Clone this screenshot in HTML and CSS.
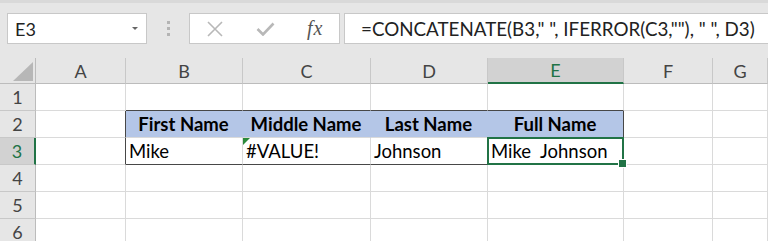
FILE: index.html
```html
<!DOCTYPE html>
<html lang="en">

<head>
  <meta charset="UTF-8">
  <title>CONCATENATE with IFERROR</title>
  <link rel="stylesheet" href="styles.css">
</head>

<body>
  <div class="top-strip"></div>

  <div class="formula-bar">
    <div class="name-box">
      <span>E3</span>
      <span class="caret"></span>
    </div>
    <div class="grip">
      <span></span><span></span><span></span>
    </div>
    <div class="fx-box">
      <svg class="btn" width="18" height="16" viewBox="0 0 18 16">
        <path d="M2 1 L16 15 M16 1 L2 15" stroke="#b8b8b8" stroke-width="1.6" fill="none" />
      </svg>
      <svg class="btn" width="19" height="14" viewBox="0 0 19 14">
        <path d="M1.5 7 L7 12.5 L17.5 1.5" stroke="#b8b8b8" stroke-width="2.6" fill="none" />
      </svg>
      <span class="fx">fx</span>
    </div>
    <div class="formula">=CONCATENATE(B3," ", IFERROR(C3,""), " ", D3)</div>
  </div>

  <div class="sheet">
    <!-- column headers -->
    <div class="corner">
      <svg width="20" height="19" viewBox="0 0 20 19">
        <path d="M0 19 L20 19 L20 0 Z" fill="#b7b7b7" />
      </svg>
    </div>
    <div class="col-head">A</div>
    <div class="col-head">B</div>
    <div class="col-head">C</div>
    <div class="col-head">D</div>
    <div class="col-head active">E</div>
    <div class="col-head">F</div>
    <div class="col-head">G</div>

    <!-- row 1 -->
    <div class="row-head">1</div>
    <div class="cell"></div>
    <div class="cell tbl-top"></div>
    <div class="cell tbl-top"></div>
    <div class="cell tbl-top"></div>
    <div class="cell tbl-top"></div>
    <div class="cell"></div>
    <div class="cell"></div>

    <!-- row 2 -->
    <div class="row-head">2</div>
    <div class="cell tbl-left"></div>
    <div class="cell th">First Name</div>
    <div class="cell th">Middle Name</div>
    <div class="cell th">Last Name</div>
    <div class="cell th tbl-right">Full Name</div>
    <div class="cell"></div>
    <div class="cell"></div>

    <!-- row 3 -->
    <div class="row-head active">3</div>
    <div class="cell tbl-left"></div>
    <div class="cell tbl-bottom">Mike</div>
    <div class="cell tbl-bottom flagged">#VALUE!</div>
    <div class="cell tbl-bottom">Johnson</div>
    <div class="cell tbl-bottom tbl-right selected">Mike&nbsp; Johnson</div>
    <div class="cell"></div>
    <div class="cell"></div>

    <!-- rows 4 to 6 -->
    <div class="row-head">4</div>
    <div class="cell"></div><div class="cell"></div><div class="cell"></div><div class="cell"></div><div class="cell"></div><div class="cell"></div><div class="cell"></div>
    <div class="row-head">5</div>
    <div class="cell"></div><div class="cell"></div><div class="cell"></div><div class="cell"></div><div class="cell"></div><div class="cell"></div><div class="cell"></div>
    <div class="row-head">6</div>
    <div class="cell"></div><div class="cell"></div><div class="cell"></div><div class="cell"></div><div class="cell"></div><div class="cell"></div><div class="cell"></div>
  </div>
</body>

</html>
```

FILE: styles.css
```css
* {
  box-sizing: border-box;
}

body {
  margin: 0;
  background-color: #e6e6e6;
  font-family: Lato, 'Liberation Sans', sans-serif;
  color: #000;
  overflow: hidden;
}

.top-strip {
  height: 3px;
  background-color: #d9d9d9;
}

.formula-bar {
  display: flex;
  align-items: center;
  height: 55px;
  padding: 10px 0 14px 7px;
}

.name-box,
.fx-box,
.formula {
  height: 31px;
  background-color: #fff;
  border: 1px solid #c8c8c8;
  display: flex;
  align-items: center;
}

.name-box {
  width: 140px;
  padding: 0 8px 0 7px;
  justify-content: space-between;
  font-size: 18px;
  color: #222;
}

.caret {
  width: 0;
  height: 0;
  border-left: 3px solid transparent;
  border-right: 3px solid transparent;
  border-top: 3px solid #666;
}

.grip {
  width: 42px;
  display: flex;
  flex-direction: column;
  align-items: center;
  gap: 3px;
}

.grip span {
  width: 3px;
  height: 3px;
  background-color: #b4b4b4;
}

.fx-box {
  width: 151px;
  padding-left: 16px;
}

.fx-box .btn:first-child {
  margin-right: 32px;
}

.fx {
  margin-left: 32px;
  font-family: 'Liberation Serif', serif;
  font-style: italic;
  font-size: 20px;
  color: #555;
  letter-spacing: 1px;
}

.formula {
  flex: 1;
  margin-left: 4px;
  margin-right: -4px;
  padding-left: 16px;
  font-size: 18.8px;
  color: #222;
  white-space: nowrap;
}

.sheet {
  display: grid;
  grid-template-columns: 36px 90px 117px 128px 117px 136px 89px 1fr;
  grid-template-rows: 26px repeat(6, 27px);
  background-color: #fff;
  font-size: 18.5px;
}

.corner {
  background-color: #e6e6e6;
  border-right: 1px solid #bcbcbc;
  border-bottom: 1px solid #bcbcbc;
  display: flex;
  align-items: flex-end;
  justify-content: flex-end;
  padding: 0 2px 2px 0;
}

.col-head {
  background-color: #e6e6e6;
  border-right: 1px solid #c8c8c8;
  border-bottom: 1px solid #bcbcbc;
  color: #444;
  font-size: 18px;
  display: flex;
  align-items: center;
  justify-content: center;
}

.col-head.active {
  background-color: #d2d2d2;
  color: #217346;
  border-bottom: 2px solid #217346;
}

.row-head {
  background-color: #e6e6e6;
  border-right: 1px solid #bcbcbc;
  border-bottom: 1px solid #c8c8c8;
  color: #444;
  font-size: 18px;
  display: flex;
  align-items: center;
  justify-content: center;
}

.row-head.active {
  background-color: #d2d2d2;
  color: #217346;
  border-right: 2px solid #217346;
}

.cell {
  position: relative;
  border-right: 1px solid #dadada;
  border-bottom: 1px solid #dadada;
  padding: 0 4px 0 3px;
  display: flex;
  align-items: center;
  white-space: nowrap;
}

.th {
  background-color: #b4c6e7;
  border-right-color: #b4c6e7;
  font-weight: bold;
  justify-content: center;
}

.tbl-top {
  border-bottom-color: #474747;
}

.tbl-bottom {
  border-bottom-color: #474747;
}

.tbl-left {
  border-right-color: #474747;
}

.tbl-right {
  border-right-color: #474747;
}

.flagged::before {
  content: '';
  position: absolute;
  top: 0;
  left: 0;
  border-top: 7px solid #2a8a3a;
  border-right: 7px solid transparent;
}

.selected::after {
  content: '';
  position: absolute;
  top: -1px;
  left: -1px;
  right: -1px;
  bottom: -1px;
  border: 2px solid #217346;
}

.selected::before {
  content: '';
  position: absolute;
  right: -4px;
  bottom: -4px;
  width: 7px;
  height: 7px;
  background-color: #217346;
  border: 1px solid #fff;
  z-index: 1;
}
```
